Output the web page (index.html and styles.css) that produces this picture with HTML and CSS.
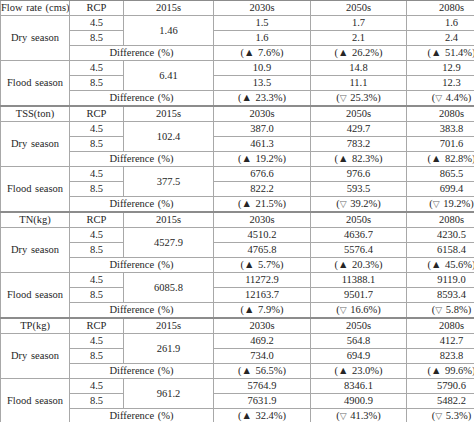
FILE: index.html
```html
<!DOCTYPE html>
<html>
<head>
<meta charset="utf-8">
<link rel="stylesheet" href="styles.css">
</head>
<body>
<div class="frame">
<table class="data">
  <colgroup>
    <col class="c1"><col class="c2"><col class="c3"><col class="c4"><col class="c5"><col class="c6">
  </colgroup>
  <tbody class="sec first">
    <tr class="head"><td>Flow rate (cms)</td><td>RCP</td><td>2015s</td><td>2030s</td><td>2050s</td><td>2080s</td></tr>
    <tr><td rowspan="3">Dry season</td><td>4.5</td><td rowspan="2">1.46</td><td>1.5</td><td>1.7</td><td>1.6</td></tr>
    <tr><td>8.5</td><td>1.6</td><td>2.1</td><td>2.4</td></tr>
    <tr class="diff"><td colspan="2">Difference (%)</td><td>(▲ 7.6%)</td><td>(▲ 26.2%)</td><td>(▲ 51.4%)</td></tr>
    <tr class="season"><td rowspan="3">Flood season</td><td>4.5</td><td rowspan="2">6.41</td><td>10.9</td><td>14.8</td><td>12.9</td></tr>
    <tr><td>8.5</td><td>13.5</td><td>11.1</td><td>12.3</td></tr>
    <tr class="diff"><td colspan="2">Difference (%)</td><td>(▲ 23.3%)</td><td>(<span class="down">▽</span> 25.3%)</td><td>(<span class="down">▽</span> 4.4%)</td></tr>
  </tbody>
  <tbody class="sec">
    <tr class="head"><td>TSS(ton)</td><td>RCP</td><td>2015s</td><td>2030s</td><td>2050s</td><td>2080s</td></tr>
    <tr><td rowspan="3">Dry season</td><td>4.5</td><td rowspan="2">102.4</td><td>387.0</td><td>429.7</td><td>383.8</td></tr>
    <tr><td>8.5</td><td>461.3</td><td>783.2</td><td>701.6</td></tr>
    <tr class="diff"><td colspan="2">Difference (%)</td><td>(▲ 19.2%)</td><td>(▲ 82.3%)</td><td>(▲ 82.8%)</td></tr>
    <tr class="season"><td rowspan="3">Flood season</td><td>4.5</td><td rowspan="2">377.5</td><td>676.6</td><td>976.6</td><td>865.5</td></tr>
    <tr><td>8.5</td><td>822.2</td><td>593.5</td><td>699.4</td></tr>
    <tr class="diff"><td colspan="2">Difference (%)</td><td>(▲ 21.5%)</td><td>(<span class="down">▽</span> 39.2%)</td><td>(<span class="down">▽</span> 19.2%)</td></tr>
  </tbody>
  <tbody class="sec">
    <tr class="head"><td>TN(kg)</td><td>RCP</td><td>2015s</td><td>2030s</td><td>2050s</td><td>2080s</td></tr>
    <tr><td rowspan="3">Dry season</td><td>4.5</td><td rowspan="2">4527.9</td><td>4510.2</td><td>4636.7</td><td>4230.5</td></tr>
    <tr><td>8.5</td><td>4765.8</td><td>5576.4</td><td>6158.4</td></tr>
    <tr class="diff"><td colspan="2">Difference (%)</td><td>(▲ 5.7%)</td><td>(▲ 20.3%)</td><td>(▲ 45.6%)</td></tr>
    <tr class="season"><td rowspan="3">Flood season</td><td>4.5</td><td rowspan="2">6085.8</td><td>11272.9</td><td>11388.1</td><td>9119.0</td></tr>
    <tr><td>8.5</td><td>12163.7</td><td>9501.7</td><td>8593.4</td></tr>
    <tr class="diff"><td colspan="2">Difference (%)</td><td>(▲ 7.9%)</td><td>(<span class="down">▽</span> 16.6%)</td><td>(<span class="down">▽</span> 5.8%)</td></tr>
  </tbody>
  <tbody class="sec">
    <tr class="head"><td>TP(kg)</td><td>RCP</td><td>2015s</td><td>2030s</td><td>2050s</td><td>2080s</td></tr>
    <tr><td rowspan="3">Dry season</td><td>4.5</td><td rowspan="2">261.9</td><td>469.2</td><td>564.8</td><td>412.7</td></tr>
    <tr><td>8.5</td><td>734.0</td><td>694.9</td><td>823.8</td></tr>
    <tr class="diff"><td colspan="2">Difference (%)</td><td>(▲ 56.5%)</td><td>(▲ 23.0%)</td><td>(▲ 99.6%)</td></tr>
    <tr class="season"><td rowspan="3">Flood season</td><td>4.5</td><td rowspan="2">961.2</td><td>5764.9</td><td>8346.1</td><td>5790.6</td></tr>
    <tr><td>8.5</td><td>7631.9</td><td>4900.9</td><td>5482.2</td></tr>
    <tr class="diff"><td colspan="2">Difference (%)</td><td>(▲ 32.4%)</td><td>(<span class="down">▽</span> 41.3%)</td><td>(<span class="down">▽</span> 5.3%)</td></tr>
  </tbody>
</table>
</div>
</body>
</html>
```

FILE: styles.css
```css
html, body {
  margin: 0;
  padding: 0;
  background: #fff;
}
.frame {
  width: 474px;
  height: 422px;
  overflow: hidden;
}
.data {
  border-collapse: collapse;
  table-layout: fixed;
  width: 496px;
  margin-top: -1px;
  font-family: "Liberation Serif", "DejaVu Serif", serif;
  font-size: 10.5px;
  word-spacing: 1px;
  color: #262626;
}
.c1 { width: 69px; }
.c2 { width: 54px; }
.c3 { width: 90px; }
.c4 { width: 97px; }
.c5 { width: 96px; }
.c6 { width: 90px; }
.data td {
  border: 1px solid #a8a8a8;
  padding: 0;
  height: 14px;
  line-height: 14px;
  text-align: center;
  vertical-align: middle;
  white-space: nowrap;
  overflow: hidden;
}
.data tr.head td {
  height: 13px;
  border-top: 2px solid #8c8c8c;
}
.down {
  color: #6a6a6a;
  font-family: "DejaVu Sans", sans-serif;
  font-size: 9px;
}
```
